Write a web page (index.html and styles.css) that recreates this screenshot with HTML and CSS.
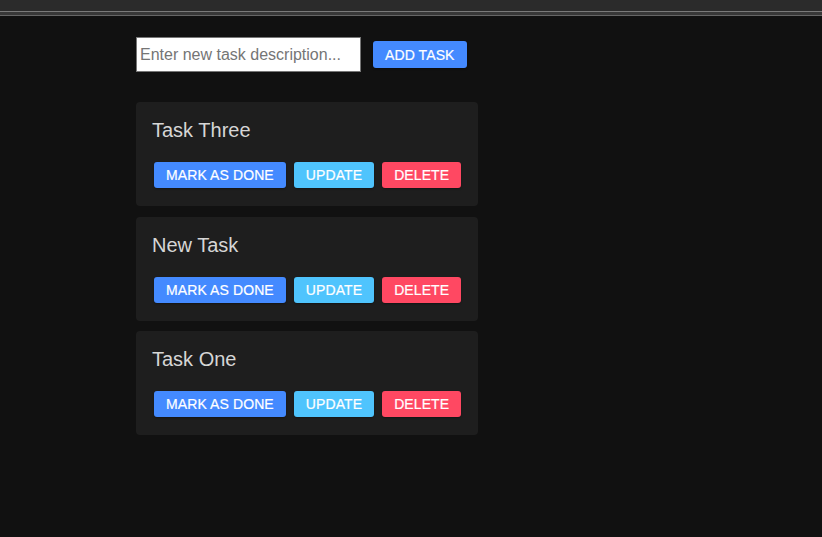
FILE: index.html
```html
<!DOCTYPE html>
<html>
<head>
<meta charset="utf-8">
<link rel="stylesheet" href="styles.css">
</head>
<body>
<div class="chrome">
  <div class="chrome-top"></div>
  <div class="chrome-line"></div>
  <div class="chrome-mid"></div>
  <div class="chrome-line dim"></div>
</div>
<main class="app">
  <form class="new-task">
    <input class="task-input" type="text" placeholder="Enter new task description...">
    <button class="btn btn-blue add" type="button">ADD TASK</button>
  </form>
  <div class="task-list">
    <div class="card">
      <div class="title">Task Three</div>
      <div class="actions">
        <button class="btn btn-blue">MARK AS DONE</button>
        <button class="btn btn-cyan">UPDATE</button>
        <button class="btn btn-red">DELETE</button>
      </div>
    </div>
    <div class="card">
      <div class="title">New Task</div>
      <div class="actions">
        <button class="btn btn-blue">MARK AS DONE</button>
        <button class="btn btn-cyan">UPDATE</button>
        <button class="btn btn-red">DELETE</button>
      </div>
    </div>
    <div class="card">
      <div class="title">Task One</div>
      <div class="actions">
        <button class="btn btn-blue">MARK AS DONE</button>
        <button class="btn btn-cyan">UPDATE</button>
        <button class="btn btn-red">DELETE</button>
      </div>
    </div>
  </div>
</main>
</body>
</html>
```
FILE: styles.css
```css
html, body {
  margin: 0;
  padding: 0;
  background: #111111;
  font-family: "Liberation Sans", Arial, sans-serif;
  height: 100%;
  overflow: hidden;
}
.chrome-top { height: 11px; background: #2b2b2b; }
.chrome-line { height: 1px; background: #7a7a7a; }
.chrome-line.dim { background: #666666; }
.chrome-mid { height: 3px; background: #383838; }

.app {
  width: 342px;
  margin-left: 136px;
  padding-top: 21px;
}
.new-task {
  display: flex;
  align-items: center;
  gap: 12px;
  margin: 0;
}
.task-input {
  box-sizing: border-box;
  width: 225px;
  height: 35px;
  margin: 0;
  padding: 0 3px;
  border: 1px solid #767676;
  background: #ffffff;
  font-family: "Liberation Sans", Arial, sans-serif;
  font-size: 16px;
  color: #222;
  outline: none;
}
.task-input::placeholder { color: #757575; }

.btn {
  box-sizing: border-box;
  border: none;
  border-radius: 3px;
  padding: 0 12px;
  height: 26px;
  font-family: "Liberation Sans", Arial, sans-serif;
  font-size: 14px;
  letter-spacing: 0.1px;
  color: #ffffff;
  -webkit-text-stroke: 0.2px #ffffff;
  cursor: pointer;
  box-shadow: 0 1px 2px rgba(0,0,0,0.35);
  margin: 0;
}
.btn.add { height: 27px; }
.btn-blue { background: #448aff; }
.btn-cyan { background: #4fc4fd; }
.btn-red { background: #ff4862; }

.task-list {
  margin-top: 30px;
  display: flex;
  flex-direction: column;
  gap: 10.5px;
}
.card {
  background: #1e1e1e;
  border-radius: 4px;
  padding: 16px 16px 18px;
}
.title {
  font-size: 20px;
  line-height: 24px;
  color: #d6d6d6;
}
.actions {
  margin-top: 20px;
  padding-left: 2px;
  display: flex;
  gap: 8px;
}
```
